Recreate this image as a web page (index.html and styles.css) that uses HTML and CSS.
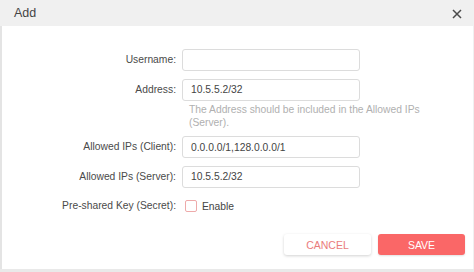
FILE: index.html
```html
<!DOCTYPE html>
<html lang="en">
<head>
	<meta charset="UTF-8">
	<title>Add</title>
	<link rel="stylesheet" href="styles.css">
</head>
<body>
	<div class="dialog">
		<div class="dialog-head">
			<span class="title">Add</span>
			<span class="close">
				<svg width="10" height="10" viewBox="0 0 10 10"><path d="M1 1L9 9M9 1L1 9" stroke="#4a4a4a" stroke-width="1.5" fill="none"/></svg>
			</span>
		</div>
		<div class="dialog-body">
			<div class="form">
				<label class="lbl">Username:</label>
				<div class="field"><input type="text" class="txt" value=""></div>

				<label class="lbl">Address:</label>
				<div class="field">
					<input type="text" class="txt" value="10.5.5.2/32">
					<p class="hint">The Address should be included in the Allowed IPs (Server).</p>
				</div>

				<label class="lbl">Allowed IPs (Client):</label>
				<div class="field"><input type="text" class="txt" value="0.0.0.0/1,128.0.0.0/1"></div>

				<label class="lbl">Allowed IPs (Server):</label>
				<div class="field"><input type="text" class="txt" value="10.5.5.2/32"></div>

				<label class="lbl">Pre-shared Key (Secret):</label>
				<div class="field check-row"><span class="box"></span><span>Enable</span></div>
			</div>
			<div class="actions">
				<button class="btn cancel">CANCEL</button>
				<button class="btn save">SAVE</button>
			</div>
		</div>
	</div>
</body>
</html>
```

FILE: styles.css
```css
* {
	margin: 0;
	padding: 0;
	box-sizing: border-box;
}
body {
	width: 474px;
	height: 272px;
	background: #e9e9e9;
	font-family: "Liberation Sans", Arial, sans-serif;
	color: #444;
	overflow: hidden;
}
.dialog {
	height: 269px;
	background: #fff;
}
.dialog-head {
	height: 26px;
	background: #f0f0f0;
	display: flex;
	align-items: center;
	justify-content: space-between;
	padding: 0 12px 0 14px;
}
.dialog-head .title {
	font-size: 12.5px;
	color: #444;
}
.dialog-head .close {
	display: flex;
	margin-top: 1px;
}
.dialog-body {
	height: 243px;
	border-left: 2px solid #e4e4e4;
	border-right: 1px solid #f0f0f0;
	padding-top: 23px;
}
.form {
	display: grid;
	grid-template-columns: 174px 178px;
	column-gap: 6px;
	row-gap: 7.5px;
	font-size: 10.3px;
}
.lbl {
	text-align: right;
	line-height: 22px;
	color: #4a4a4a;
}
.txt {
	width: 178px;
	height: 22px;
	border: 1px solid #dcdcdc;
	border-radius: 3px;
	padding: 0 8px;
	font-family: inherit;
	font-size: 10.3px;
	color: #444;
	outline: none;
	display: block;
}
.hint {
	color: #b0b0b0;
	line-height: 13px;
	padding: 2px 0 0 7px;
	width: 250px;
	font-size: 10.3px;
}
.field {
	min-height: 22px;
}
.check-row {
	display: flex;
	align-items: center;
	gap: 5px;
	padding-left: 3px;
}
.box {
	width: 12px;
	height: 12px;
	border: 1px solid #eeaaaa;
	border-radius: 2px;
}
.actions {
	display: flex;
	justify-content: flex-end;
	gap: 7px;
	padding-right: 8px;
	margin-top: 17px;
}
.btn {
	width: 87px;
	height: 21px;
	border: none;
	border-radius: 3px;
	font-family: inherit;
	font-size: 10.5px;
	cursor: pointer;
}
.cancel {
	background: #fff;
	color: #ea7c7c;
	box-shadow: 0 1px 3px rgba(0, 0, 0, 0.18);
}
.save {
	background: #fa6767;
	color: #fff;
	box-shadow: 0 1px 2px rgba(0, 0, 0, 0.12);
}
```
